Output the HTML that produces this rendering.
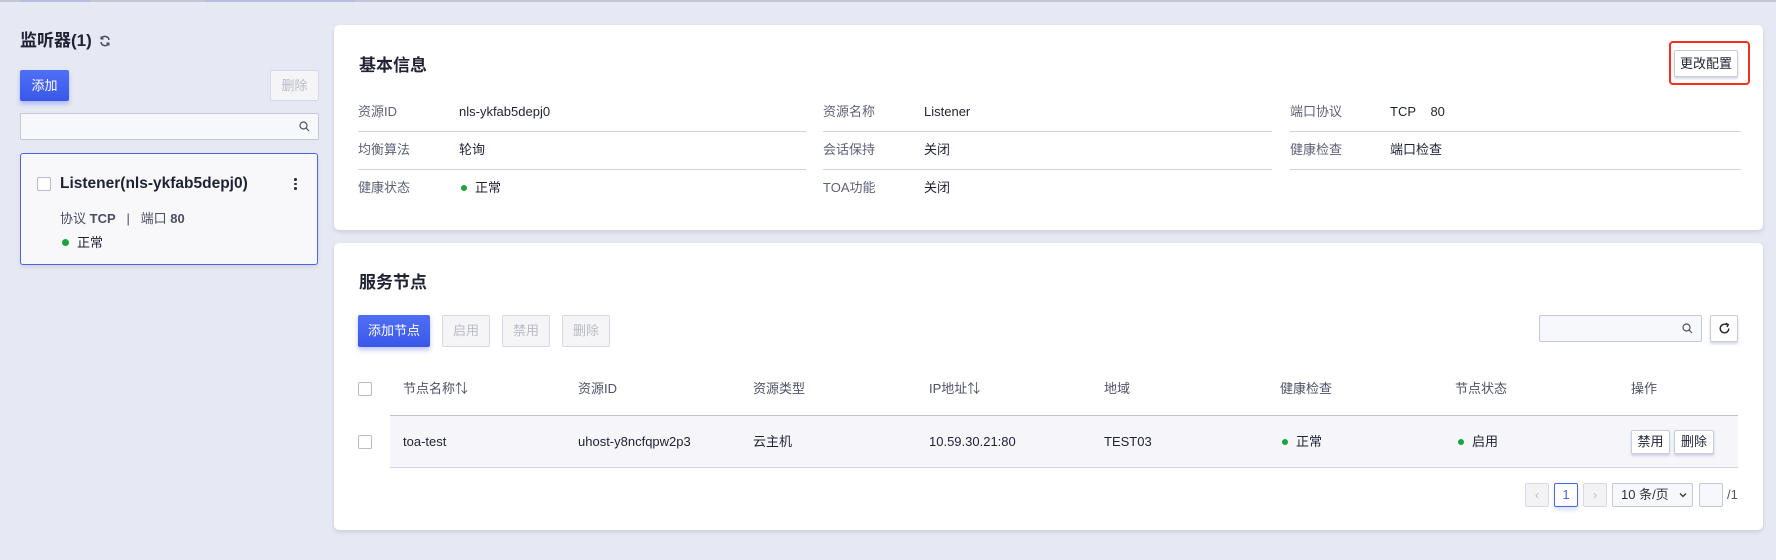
<!DOCTYPE html>
<html><head><meta charset="utf-8">
<style>
*{box-sizing:border-box;margin:0;padding:0}
body{width:1776px;height:560px;background:#e6e9f3;font-family:"Liberation Sans","Noto Sans CJK SC",sans-serif;color:#1f2233;position:relative;overflow:hidden;font-size:13px;line-height:18px}
.a{position:absolute;line-height:18px}
.topline{left:0;top:0;width:1776px;height:2px;background:#c3c7d3}
.card{background:#fff;border-radius:5px;box-shadow:0 2px 4px rgba(0,0,0,.12)}
.btnp{background:linear-gradient(#4f6ff7,#3a58e8);color:#fff;border-radius:2px;box-shadow:0 3px 5px rgba(59,91,234,.35);display:flex;align-items:center;justify-content:center;font-size:13px}
.btnd{background:#f5f5f7;border:1px solid #d8dae2;color:#b8bbc6;border-radius:2px;display:flex;align-items:center;justify-content:center;font-size:13px}
.btnw{background:#fff;border:1px solid #c9cdd9;border-radius:2px;box-shadow:0 2px 2px rgba(120,130,170,.3);display:flex;align-items:center;justify-content:center;font-size:13px;color:#1f2233}
.inp{background:#f7f8fb;border:1px solid #c5c9d6;border-radius:2px}
.lbl{color:#5d6275;font-size:13px}
.val{font-size:13px;color:#1f2233}
.line{height:1px;background:#d2d5e1}
.dot{width:7px;height:7px;border-radius:50%;background:#19a53b;display:inline-block}
.cb{width:14px;height:14px;border:1px solid #b8bcc9;border-radius:2px;background:#fff}
.th{color:#4d5266;font-size:13px}
</style></head><body>
<div class="a topline"></div>
<div class="a" style="left:20px;top:0;width:70px;height:2px;background:#b6bde0"></div>
<div class="a" style="left:205px;top:0;width:150px;height:2px;background:#b6bde0"></div>

<!-- left -->
<div class="a" style="left:20px;top:30px;font-size:17px;font-weight:bold;line-height:22px">监听器(1)</div>
<svg class="a" style="left:99px;top:35px" width="12" height="12" viewBox="0 0 12 12" fill="none" stroke="#4a4f60" stroke-width="1.5"><path d="M10 5A4 4 0 0 0 2.5 3.5M2 7a4 4 0 0 0 7.5 1.5"/><path d="M2.2 1.5v2.3h2.3M9.8 10.5V8.2H7.5"/></svg>
<div class="a btnp" style="left:20px;top:70px;width:49px;height:31px">添加</div>
<div class="a btnd" style="left:270px;top:70px;width:49px;height:31px">删除</div>
<div class="a inp" style="left:20px;top:113px;width:299px;height:27px"></div>
<svg class="a" style="left:299px;top:121px" width="11" height="11" viewBox="0 0 11 11" fill="none" stroke="#555" stroke-width="1.2"><circle cx="4.5" cy="4.5" r="3.5"/><path d="M7.2 7.2 10 10"/></svg>
<div class="a" style="left:20px;top:153px;width:298px;height:112px;background:#f8f8fb;border:1px solid #4c64e8;border-radius:3px;box-shadow:0 2px 4px rgba(0,0,0,.1)"></div>
<div class="a cb" style="left:37px;top:177px;width:14px;height:14px"></div>
<div class="a" style="left:60px;top:174px;font-size:15.5px;font-weight:bold;line-height:20px">Listener(nls-ykfab5depj0)</div>
<div class="a" style="left:294px;top:178px;width:3px;font-size:0;line-height:0">
<div style="width:2.5px;height:2.5px;background:#333;border-radius:50%;margin-bottom:2px"></div><div style="width:2.5px;height:2.5px;background:#333;border-radius:50%;margin-bottom:2px"></div><div style="width:2.5px;height:2.5px;background:#333;border-radius:50%"></div></div>
<div class="a" style="left:60px;top:210px;font-size:13px;color:#4a4f60">协议 <b>TCP</b>&nbsp;&nbsp;&nbsp;|&nbsp;&nbsp;&nbsp;端口 <b>80</b></div>
<div class="a" style="left:62px;top:234px;font-size:13px"><span class="dot" style="margin-right:8px;vertical-align:1px"></span>正常</div>

<!-- basic info -->
<div class="a card" style="left:334px;top:25px;width:1429px;height:205px"></div>
<div class="a" style="left:359px;top:55px;font-size:17px;font-weight:bold;line-height:22px">基本信息</div>
<div class="a" style="left:1669px;top:41px;width:81px;height:44px;border:2px solid #f3301f;border-radius:4px"></div>
<div class="a btnw" style="left:1674px;top:50px;width:64px;height:27px">更改配置</div>

<div class="a lbl" style="left:358px;top:103px">资源ID</div>
<div class="a val" style="left:459px;top:103px">nls-ykfab5depj0</div>
<div class="a lbl" style="left:823px;top:103px">资源名称</div>
<div class="a val" style="left:924px;top:103px">Listener</div>
<div class="a lbl" style="left:1290px;top:103px">端口协议</div>
<div class="a val" style="left:1390px;top:103px">TCP&nbsp;&nbsp;&nbsp;&nbsp;80</div>
<div class="a line" style="left:358px;top:131px;width:448px"></div>
<div class="a line" style="left:823px;top:131px;width:449px"></div>
<div class="a line" style="left:1290px;top:131px;width:451px"></div>

<div class="a lbl" style="left:358px;top:141px">均衡算法</div>
<div class="a val" style="left:459px;top:141px">轮询</div>
<div class="a lbl" style="left:823px;top:141px">会话保持</div>
<div class="a val" style="left:924px;top:141px">关闭</div>
<div class="a lbl" style="left:1290px;top:141px">健康检查</div>
<div class="a val" style="left:1390px;top:141px">端口检查</div>
<div class="a line" style="left:358px;top:169px;width:448px"></div>
<div class="a line" style="left:823px;top:169px;width:449px"></div>
<div class="a line" style="left:1290px;top:169px;width:451px"></div>

<div class="a lbl" style="left:358px;top:179px">健康状态</div>
<div class="a val" style="left:461px;top:179px"><span class="dot" style="margin-right:8px;vertical-align:1px;width:6px;height:6px"></span>正常</div>
<div class="a lbl" style="left:823px;top:179px">TOA功能</div>
<div class="a val" style="left:924px;top:179px">关闭</div>

<!-- service nodes -->
<div class="a card" style="left:334px;top:243px;width:1429px;height:287px"></div>
<div class="a" style="left:359px;top:272px;font-size:17px;font-weight:bold;line-height:22px">服务节点</div>
<div class="a btnp" style="left:358px;top:315px;width:72px;height:32px">添加节点</div>
<div class="a btnd" style="left:442px;top:315px;width:48px;height:32px">启用</div>
<div class="a btnd" style="left:502px;top:315px;width:48px;height:32px">禁用</div>
<div class="a btnd" style="left:562px;top:315px;width:48px;height:32px">删除</div>
<div class="a inp" style="left:1539px;top:315px;width:163px;height:27px"></div>
<svg class="a" style="left:1682px;top:323px" width="11" height="11" viewBox="0 0 11 11" fill="none" stroke="#555" stroke-width="1.2"><circle cx="4.5" cy="4.5" r="3.5"/><path d="M7.2 7.2 10 10"/></svg>
<div class="a btnw" style="left:1710px;top:315px;width:28px;height:27px">
<svg width="13" height="13" viewBox="0 0 13 13" fill="none" stroke="#222" stroke-width="1.4"><path d="M10.8 6.5A4.3 4.3 0 1 1 8.7 2.8"/><path d="M7.8 1.2 10.3 2.6 8.9 5"/></svg></div>

<div class="a cb" style="left:358px;top:382px"></div>
<div class="a th" style="left:403px;top:380px">节点名称⇅</div>
<div class="a th" style="left:578px;top:380px">资源ID</div>
<div class="a th" style="left:753px;top:380px">资源类型</div>
<div class="a th" style="left:929px;top:380px">IP地址⇅</div>
<div class="a th" style="left:1104px;top:380px">地域</div>
<div class="a th" style="left:1280px;top:380px">健康检查</div>
<div class="a th" style="left:1455px;top:380px">节点状态</div>
<div class="a th" style="left:1631px;top:380px">操作</div>
<div class="a" style="left:390px;top:415px;width:1348px;height:53px;background:#f5f5fa;border-top:1px solid #bfc3d0;border-bottom:1px solid #d2d5e4"></div>
<div class="a cb" style="left:358px;top:435px"></div>
<div class="a val" style="left:403px;top:433px">toa-test</div>
<div class="a val" style="left:578px;top:433px">uhost-y8ncfqpw2p3</div>
<div class="a val" style="left:753px;top:433px">云主机</div>
<div class="a val" style="left:929px;top:433px">10.59.30.21:80</div>
<div class="a val" style="left:1104px;top:433px">TEST03</div>
<div class="a val" style="left:1282px;top:433px"><span class="dot" style="margin-right:8px;vertical-align:1px;width:6px;height:6px"></span>正常</div>
<div class="a val" style="left:1458px;top:433px"><span class="dot" style="margin-right:8px;vertical-align:1px;width:6px;height:6px"></span>启用</div>
<div class="a btnw" style="left:1631px;top:430px;width:39px;height:24px">禁用</div>
<div class="a btnw" style="left:1674px;top:430px;width:40px;height:24px">删除</div>

<div class="a btnd" style="left:1525px;top:483px;width:24px;height:24px;background:#f3f3f6;color:#bbb;font-size:12px">‹</div>
<div class="a" style="left:1554px;top:483px;width:24px;height:24px;border:1px solid #4c64e8;border-radius:2px;background:#fff;color:#4c64e8;display:flex;align-items:center;justify-content:center;box-shadow:0 3px 4px rgba(76,100,232,.2)">1</div>
<div class="a btnd" style="left:1583px;top:483px;width:24px;height:24px;background:#f3f3f6;color:#bbb;font-size:12px">›</div>
<div class="a inp" style="left:1612px;top:483px;width:81px;height:24px;display:flex;align-items:center;padding-left:8px;font-size:13px;color:#333">10 条/页<svg style="margin-left:10px" width="8" height="6" viewBox="0 0 8 6" fill="none" stroke="#333" stroke-width="1.3"><path d="M1 1.5 4 4.5 7 1.5"/></svg></div>
<div class="a inp" style="left:1699px;top:483px;width:24px;height:24px"></div>
<div class="a" style="left:1727px;top:486px;color:#555">/1</div>
</body></html>
